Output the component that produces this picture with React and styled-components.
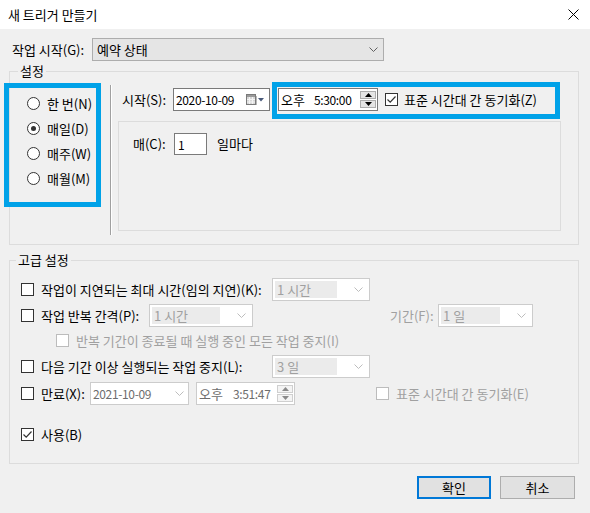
import React from 'react';
import styled, { createGlobalStyle } from 'styled-components';

const Global = createGlobalStyle`
  html, body { margin: 0; padding: 0; background: #f0f0f0; }
  body { font-family: "Noto Sans CJK KR", "Malgun Gothic", sans-serif; font-size: 13px; color: #000; }
  * { box-sizing: border-box; }
`;

const Window = styled.div`
  width: 590px; height: 513px; background: #f0f0f0;
  display: flex; flex-direction: column; overflow: hidden;
`;
const TitleBar = styled.div`
  height: 29px; flex: none; background: #fff;
  display: flex; align-items: center; justify-content: space-between;
  padding: 0 11px 0 8px;
`;
const Text = styled.span`
  font-size: 13px; line-height: 15px; white-space: nowrap;
  color: ${p => (p.$disabled ? '#a0a0a0' : p.$dim ? '#6d6d6d' : '#000')};
`;
const Digits = styled(Text)`
  font-size: 12px; letter-spacing: -0.35px;
`;
const CloseButton = styled.button`
  border: 0; background: none; padding: 0; width: 11px; height: 11px; display: flex;
`;
const Body = styled.div`
  display: flex; flex-direction: column; padding: 0 11px 0 9px;
`;
const TaskRow = styled.div`
  margin-top: 9px; height: 23px; display: flex; align-items: center; padding-left: 3px;
`;
const FieldLabel = styled(Text)`
  display: inline-block; flex: none; width: ${p => p.$w}px; padding-left: ${p => p.$pl || 0}px;
  margin-left: ${p => p.$ml || 0}px;
`;
const Select = styled.div`
  width: ${p => p.$w}px; height: 23px; flex: none;
  border: 1px solid #adadad; background: #e5e5e5;
  display: flex; align-items: center; justify-content: space-between; padding: 0 5px 0 4px;
`;
const Group = styled.fieldset`
  margin: ${p => p.$mt}px 0 0; padding: 0; border: 1px solid #dcdcdc; min-width: 0;
`;
const Legend = styled.legend`
  margin-left: ${p => p.$ml}px; padding: 0 2px; font-size: 13px; line-height: 14px;
`;
const SettingsBody = styled.div`
  display: flex; align-items: flex-start; padding-bottom: 9px;
`;
const Highlight = styled.div`
  border: 5px solid #00a2e8; flex: none;
`;
const RadioBox = styled(Highlight)`
  width: 97px; height: 124px; margin: 5px 0 0 -6px; padding: 3px 0 0 18px;
  display: flex; flex-direction: column;
`;
const RadioRow = styled.div`
  height: 25px; display: flex; align-items: center; gap: 7px;
`;
const RadioDot = styled.span`
  width: 13px; height: 13px; border-radius: 50%; border: 1px solid #333; background: #fff;
  display: flex; align-items: center; justify-content: center; flex: none;
  &::after {
    content: ''; width: 5px; height: 5px; border-radius: 50%;
    background: ${p => (p.$on ? '#333' : 'transparent')};
  }
`;
const Separator = styled.div`
  width: 2px; height: 150px; margin: 7px 0 0 9px; flex: none;
  border-left: 1px solid #a0a0a0; border-right: 1px solid #fff;
`;
const Schedule = styled.div`
  margin: 4px 0 0 6px; display: flex; flex-direction: column;
`;
const StartRow = styled.div`
  display: flex; align-items: flex-start; height: 37px;
`;
const InputBox = styled.div`
  width: ${p => p.$w}px; height: ${p => p.$h || 23}px; flex: none;
  margin-top: ${p => p.$mt || 0}px;
  border: 1px solid ${p => (p.$disabled ? '#cccccc' : '#7a7a7a')}; background: #fff;
  display: flex; align-items: ${p => p.$top ? 'flex-start' : 'center'};
  padding: ${p => p.$top ? '3px 0 0 3px' : '0 4px 0 2px'};
`;
const Grow = styled.span`
  flex: 1;
`;
const TimeBox = styled(Highlight)`
  width: 288px; height: 37px; margin-left: 2px;
  display: flex; align-items: center; padding: 1px 0 3px 1px;
`;
const TimeField = styled.div`
  width: ${p => p.$w}px; height: 23px; flex: none;
  border: 1px solid ${p => (p.$disabled ? '#cccccc' : '#7a7a7a')}; background: #fff;
  display: flex; align-items: center; padding: 0 1px 0 2px;
`;
const Ampm = styled(Text)`
  margin-right: ${p => p.$gap}px;
`;
const Spinner = styled.div`
  width: 16px; height: 17px; flex: none; display: flex; flex-direction: column; gap: 1px;
`;
const SpinBtn = styled.div`
  flex: 1; border: 1px solid ${p => (p.$disabled ? '#cfcfcf' : '#adadad')};
  background: ${p => (p.$disabled ? '#f4f4f4' : '#e5e5e5')};
  display: flex; align-items: center; justify-content: center;
`;
const Check = styled.span`
  width: 13px; height: 13px; flex: none; border: 1px solid ${p => (p.$disabled ? '#bcbcbc' : '#333')};
  background: #fff; display: flex; align-items: center; justify-content: center;
  margin-left: ${p => p.$ml || 0}px; margin-right: ${p => p.$mr || 0}px;
`;
const Panel = styled.div`
  margin-top: 2px; width: 443px; height: 110px; border: 1px solid #dcdcdc;
  padding: 11px 0 0 14px; display: flex; align-items: flex-start;
`;
const PanelLabel = styled(Text)`
  display: inline-block; width: 41px; line-height: 22px;
`;
const PanelSuffix = styled(Text)`
  margin-left: 10px; line-height: 22px;
`;
const AdvancedBody = styled.div`
  display: flex; flex-direction: column; padding: 0 0 17px 11px;
`;
const OptionRow = styled.div`
  height: 23px; display: flex; align-items: center;
  margin-top: ${p => p.$mt}px; padding-left: ${p => p.$pl || 0}px;
`;
const Combo = styled.div`
  width: ${p => p.$w}px; height: 23px; flex: none; margin-left: ${p => p.$ml || 0}px;
  border: 1px solid #cccccc; background: #fff; padding: 2px;
  display: flex; align-items: center;
`;
const ComboField = styled.div`
  flex: 1; align-self: stretch; background: #ebebeb; margin-right: 17px;
  display: flex; align-items: center; padding-left: 2px;
`;
const ComboArrow = styled.span`
  display: flex; margin-right: 4px;
`;
const Footer = styled.div`
  margin-top: 12px; display: flex; justify-content: flex-end; gap: 9px; padding-right: 4px;
`;
const Button = styled.button`
  width: ${p => (p.$primary ? 74 : 75)}px; height: 23px; padding: 0;
  font-family: inherit; font-size: 13px; line-height: 15px; color: #000;
  background: #e1e1e1; border: ${p => (p.$primary ? '2px solid #0078d7' : '1px solid #adadad')};
`;

const Chevron = ({ color = '#606060' }) => (
  <svg width="9" height="5" viewBox="0 0 9 5"><path d="M0.5 0.5 L4.5 4.5 L8.5 0.5" fill="none" stroke={color} strokeWidth="1" /></svg>
);
const CheckMark = ({ color = '#333' }) => (
  <svg width="11" height="11" viewBox="0 0 11 11"><path d="M1.5 5.5 L4.2 8.2 L9.5 2.5" fill="none" stroke={color} strokeWidth="1.2" /></svg>
);
const Tri = ({ up, color = '#000' }) => (
  <svg width="7" height="4" viewBox="0 0 7 4">
    <path d={up ? 'M0 4 L3.5 0 L7 4 Z' : 'M0 0 L3.5 4 L7 0 Z'} fill={color} />
  </svg>
);
const CalendarIcon = () => (
  <svg width="19" height="12" viewBox="0 0 19 12">
    <rect x="0.5" y="0.5" width="9" height="10" fill="#d6d6d6" stroke="#7a7a7a" />
    <rect x="1" y="1" width="8" height="2" fill="#9a9a9a" />
    <path d="M3.5 3 V10 M6.5 3 V10 M1 5.5 H9 M1 8 H9" stroke="#f4f4f4" strokeWidth="1" />
    <rect x="10" y="2" width="1" height="9" fill="#b8b8b8" />
    <path d="M12 4 L18 4 L15 7.5 Z" fill="#4a5a7a" />
  </svg>
);

const SpinnerCtl = ({ disabled }) => (
  <Spinner>
    <SpinBtn $disabled={disabled}><Tri up color={disabled ? '#8a8a8a' : '#000'} /></SpinBtn>
    <SpinBtn $disabled={disabled}><Tri color={disabled ? '#8a8a8a' : '#000'} /></SpinBtn>
  </Spinner>
);

const DisabledCombo = ({ w, ml, value }) => (
  <Combo $w={w} $ml={ml}>
    <ComboField><Text $disabled>{value}</Text></ComboField>
    <ComboArrow><Chevron color="#bdbdbd" /></ComboArrow>
  </Combo>
);

const radios = [
  { label: '한 번(N)', on: false },
  { label: '매일(D)', on: true },
  { label: '매주(W)', on: false },
  { label: '매월(M)', on: false },
];

export default function App() {
  return (
    <Window>
      <Global />
      <TitleBar>
        <Text>새 트리거 만들기</Text>
        <CloseButton aria-label="닫기">
          <svg width="11" height="11" viewBox="0 0 11 11">
            <path d="M0.5 0.5 L10.5 10.5 M10.5 0.5 L0.5 10.5" stroke="#000" strokeWidth="1" />
          </svg>
        </CloseButton>
      </TitleBar>
      <Body>
        <TaskRow>
          <FieldLabel $w={80}>작업 시작(G):</FieldLabel>
          <Select $w={292}>
            <Text>예약 상태</Text>
            <Chevron />
          </Select>
        </TaskRow>

        <Group $mt={3}>
          <Legend $ml={8}>설정</Legend>
          <SettingsBody>
            <RadioBox>
              {radios.map(r => (
                <RadioRow key={r.label}>
                  <RadioDot $on={r.on} />
                  <Text>{r.label}</Text>
                </RadioRow>
              ))}
            </RadioBox>
            <Separator />
            <Schedule>
              <StartRow>
                <FieldLabel $w={55} $pl={4} style={{ lineHeight: '23px', marginTop: 6 }}>시작(S):</FieldLabel>
                <InputBox $w={97} $mt={6}>
                  <Digits>2020-10-09</Digits>
                  <Grow />
                  <CalendarIcon />
                </InputBox>
                <TimeBox>
                  <TimeField $w={100}>
                    <Ampm $gap={9}>오후</Ampm>
                    <Digits>5:30:00</Digits>
                    <Grow />
                    <SpinnerCtl />
                  </TimeField>
                  <Check $ml={7} $mr={6}><CheckMark /></Check>
                  <Text>표준 시간대 간 동기화(Z)</Text>
                </TimeBox>
              </StartRow>
              <Panel>
                <PanelLabel>매(C):</PanelLabel>
                <InputBox $w={33} $h={22} $top>
                  <Digits>1</Digits>
                </InputBox>
                <PanelSuffix>일마다</PanelSuffix>
              </Panel>
            </Schedule>
          </SettingsBody>
        </Group>

        <Group $mt={8}>
          <Legend $ml={6}>고급 설정</Legend>
          <AdvancedBody>
            <OptionRow $mt={11}>
              <Check $mr={7} />
              <FieldLabel $w={231}>작업이 지연되는 최대 시간(임의 지연)(K):</FieldLabel>
              <DisabledCombo w={98} value="1 시간" />
            </OptionRow>
            <OptionRow $mt={3}>
              <Check $mr={7} />
              <FieldLabel $w={108}>작업 반복 간격(P):</FieldLabel>
              <DisabledCombo w={104} value="1 시간" />
              <FieldLabel $w={48} $ml={137} $disabled>기간(F):</FieldLabel>
              <DisabledCombo w={95} value="1 일" />
            </OptionRow>
            <OptionRow $mt={2} $pl={35}>
              <Check $disabled $mr={7} />
              <Text $disabled>반복 기간이 종료될 때 실행 중인 모든 작업 중지(I)</Text>
            </OptionRow>
            <OptionRow $mt={3}>
              <Check $mr={7} />
              <FieldLabel $w={231}>다음 기간 이상 실행되는 작업 중지(L):</FieldLabel>
              <DisabledCombo w={98} value="3 일" />
            </OptionRow>
            <OptionRow $mt={4}>
              <Check $mr={7} />
              <FieldLabel $w={49}>만료(X):</FieldLabel>
              <InputBox $w={99} $disabled>
                <Digits $dim>2021-10-09</Digits>
                <Grow />
                <Chevron color="#bdbdbd" />
              </InputBox>
              <TimeField $w={99} $disabled style={{ marginLeft: 7 }}>
                <Ampm $gap={10} $dim>오후</Ampm>
                <Digits $dim>3:51:47</Digits>
                <Grow />
                <SpinnerCtl disabled />
              </TimeField>
              <Check $disabled $ml={81} $mr={7} />
              <Text $disabled>표준 시간대 간 동기화(E)</Text>
            </OptionRow>
            <OptionRow $mt={18}>
              <Check $mr={7}><CheckMark /></Check>
              <Text>사용(B)</Text>
            </OptionRow>
          </AdvancedBody>
        </Group>

        <Footer>
          <Button $primary>확인</Button>
          <Button>취소</Button>
        </Footer>
      </Body>
    </Window>
  );
}
